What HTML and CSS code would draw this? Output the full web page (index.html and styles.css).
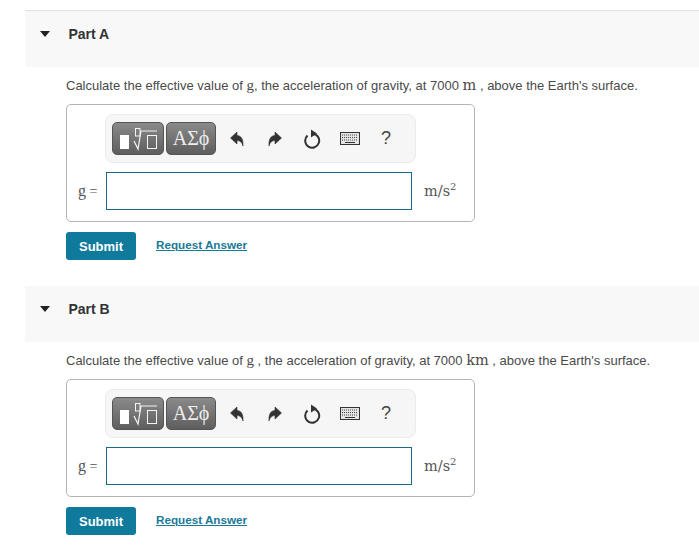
FILE: index.html

```html
<!DOCTYPE html>
<html lang="en">
<head>
    <meta charset="UTF-8">
    <title>Part A and Part B</title>
    <link rel="stylesheet" href="styles.css">
</head>
<body>
    <div class="part part-a">
        <div class="part-head first">
            <span class="arrow"></span>
            <span class="part-title">Part A</span>
        </div>
        <div class="part-body">
            <p class="question">Calculate the effective value of <span class="math">g</span>, the acceleration of gravity, at 7000 <span class="math wide">m</span> , above the Earth's surface.</p>
            <div class="answer-box">
                <div class="toolbar">
                    <button class="tool-btn templates">
                        <svg width="50" height="31" viewBox="0 0 50 31">
                            <rect x="7" y="12" width="9" height="14" fill="#fff"/>
                            <rect x="22.500" y="5.500" width="4.500" height="7.500" fill="none" stroke="#f4f4f4"/>
                            <rect x="34.500" y="12.500" width="9" height="13" fill="none" stroke="#f4f4f4"/>
                            <path d="M21 18l4 8 3-18h16" fill="none" stroke="#f4f4f4" stroke-width="1.200"/>
                        </svg>
                    </button>
                    <button class="tool-btn symbols">&Alpha;&Sigma;&#981;</button>
                    <div class="tools">
                        <svg class="tool undo" width="16" height="18" viewBox="0 0 16 18"><path d="M1.500 8L8 2v3.500c4 0 6.500 3.500 6 10.500-.7-3-2.500-5.500-6-5.500V14z" fill="#333" stroke="#333" stroke-width=".6"/></svg>
                        <svg class="tool redo" width="16" height="18" viewBox="0 0 16 18"><path d="M14.500 8L8 2v3.500C4 5.500 1.500 9 2 16c.7-3 2.500-5.500 6-5.500V14z" fill="#333" stroke="#333" stroke-width=".6"/></svg>
                        <svg class="tool reset" width="18" height="20" viewBox="0 0 18 20"><path d="M4.500 6.500A7 7 0 1 0 9.500 4.700" fill="none" stroke="#333" stroke-width="2"/><path d="M8 .5v8l6-4z" fill="#333"/></svg>
                        <svg class="tool keys" width="20" height="13" viewBox="0 0 20 13"><rect x="0.500" y="0.500" width="19" height="12" fill="#e4e4e4" stroke="#333"/><path d="M2 3h16M2 5.500h16M2 8h16" stroke="#444" stroke-dasharray="1 1"/><path d="M5 10.500h10" stroke="#333"/></svg>
                        <span class="help">?</span>
                    </div>
                </div>
                <div class="answer-row">
                    <span class="label"><span class="math">g</span> =</span>
                    <div class="answer-input"></div>
                    <span class="unit">m/s<sup>2</sup></span>
                </div>
            </div>
            <div class="actions">
                <button class="submit">Submit</button>
                <a class="request" href="#">Request Answer</a>
            </div>
        </div>
    </div>

    <div class="part part-b">
        <div class="part-head">
            <span class="arrow"></span>
            <span class="part-title">Part B</span>
        </div>
        <div class="part-body">
            <p class="question">Calculate the effective value of <span class="math">g</span> , the acceleration of gravity, at 7000 <span class="math wide">km</span> , above the Earth's surface.</p>
            <div class="answer-box">
                <div class="toolbar">
                    <button class="tool-btn templates">
                        <svg width="50" height="31" viewBox="0 0 50 31">
                            <rect x="7" y="12" width="9" height="14" fill="#fff"/>
                            <rect x="22.500" y="5.500" width="4.500" height="7.500" fill="none" stroke="#f4f4f4"/>
                            <rect x="34.500" y="12.500" width="9" height="13" fill="none" stroke="#f4f4f4"/>
                            <path d="M21 18l4 8 3-18h16" fill="none" stroke="#f4f4f4" stroke-width="1.200"/>
                        </svg>
                    </button>
                    <button class="tool-btn symbols">&Alpha;&Sigma;&#981;</button>
                    <div class="tools">
                        <svg class="tool undo" width="16" height="18" viewBox="0 0 16 18"><path d="M1.500 8L8 2v3.500c4 0 6.500 3.500 6 10.500-.7-3-2.500-5.500-6-5.500V14z" fill="#333" stroke="#333" stroke-width=".6"/></svg>
                        <svg class="tool redo" width="16" height="18" viewBox="0 0 16 18"><path d="M14.500 8L8 2v3.500C4 5.500 1.500 9 2 16c.7-3 2.500-5.500 6-5.500V14z" fill="#333" stroke="#333" stroke-width=".6"/></svg>
                        <svg class="tool reset" width="18" height="20" viewBox="0 0 18 20"><path d="M4.500 6.500A7 7 0 1 0 9.500 4.700" fill="none" stroke="#333" stroke-width="2"/><path d="M8 .5v8l6-4z" fill="#333"/></svg>
                        <svg class="tool keys" width="20" height="13" viewBox="0 0 20 13"><rect x="0.500" y="0.500" width="19" height="12" fill="#e4e4e4" stroke="#333"/><path d="M2 3h16M2 5.500h16M2 8h16" stroke="#444" stroke-dasharray="1 1"/><path d="M5 10.500h10" stroke="#333"/></svg>
                        <span class="help">?</span>
                    </div>
                </div>
                <div class="answer-row">
                    <span class="label"><span class="math">g</span> =</span>
                    <div class="answer-input"></div>
                    <span class="unit">m/s<sup>2</sup></span>
                </div>
            </div>
            <div class="actions">
                <button class="submit">Submit</button>
                <a class="request" href="#">Request Answer</a>
            </div>
        </div>
    </div>
</body>
</html>
```

FILE: styles.css

```css
html, body {
    overflow: hidden;
}
body {
    font-family: "Liberation Sans", Arial, sans-serif;
    margin: 0;
    padding: 10px 0 0 0;
    background-color: #fff;
    color: #444;
}
.part {
    margin-bottom: 25px;
}
.part-head {
    display: flex;
    align-items: center;
    height: 57px;
    margin-left: 25px;
    padding-bottom: 11px;
    box-sizing: border-box;
    background-color: #f8f8f8;
    background-clip: padding-box;
    border-top: 1px solid transparent;
}
.part-head.first {
    border-top-color: #e2e2e2;
}
.arrow {
    width: 0;
    height: 0;
    margin-left: 15px;
    border-left: 5.500px solid transparent;
    border-right: 5.500px solid transparent;
    border-top: 6px solid #222;
}
.part-title {
    margin-left: 18.500px;
    font-size: 14px;
    font-weight: bold;
    color: #333;
}
.part-body {
    padding-left: 66px;
}
.question {
    margin: 0;
    padding-top: 10px;
    height: 27px;
    font-size: 13px;
    line-height: 17px;
    color: #4a4a4a;
    white-space: nowrap;
}
.math {
    font-family: "Liberation Serif", serif;
    font-size: 15px;
}
.math.wide {
    font-family: "DejaVu Serif", serif;
    font-size: 14.500px;
}
.answer-box {
    width: 409px;
    height: 118px;
    box-sizing: border-box;
    border: 1px solid #b4b4b4;
    border-radius: 5px;
    padding: 9px 0 0 38px;
}
.toolbar {
    display: flex;
    align-items: center;
    width: 311px;
    height: 49px;
    box-sizing: border-box;
    padding-left: 6px;
    gap: 2px;
    background-color: #f6f6f6;
    border: 1px solid #ebebeb;
    border-radius: 8px;
}
.tool-btn {
    height: 33px;
    padding: 0;
    border: 1px solid #555;
    border-radius: 5px;
    background: linear-gradient(#8a8a8a, #5e5e5e);
    color: #eee;
    font-family: "Liberation Serif", serif;
    font-size: 20px;
    display: flex;
    align-items: center;
    justify-content: center;
}
.templates {
    width: 52px;
}
.symbols {
    width: 50px;
}
.tools {
    flex: 1;
    display: flex;
    align-items: center;
    height: 100%;
}
.tool {
    flex: none;
}
.undo {
    margin-left: 11px;
}
.redo {
    margin-left: 22px;
}
.reset {
    margin-left: 20px;
}
.keys {
    margin-left: 19px;
}
.help {
    margin-left: 21px;
    font-size: 18px;
    color: #444;
}
.answer-row {
    display: flex;
    align-items: center;
    margin-top: 9px;
    margin-left: -38px;
}
.label {
    width: 39px;
    box-sizing: border-box;
    padding-left: 11px;
    font-family: "Liberation Serif", serif;
    font-size: 14px;
    color: #555;
}
.label .math {
    font-size: 16px;
}
.answer-input {
    width: 306px;
    height: 38px;
    box-sizing: border-box;
    background-color: #fff;
    border: 1px solid #1b6a84;
}
.unit {
    margin-left: 12px;
    font-family: "DejaVu Serif", serif;
    font-size: 14.500px;
    color: #555;
}
.unit sup {
    font-size: 10px;
    line-height: 0;
}
.actions {
    display: flex;
    align-items: center;
    margin-top: 10px;
}
.submit {
    width: 70px;
    height: 28px;
    padding: 0;
    border: none;
    border-radius: 3px;
    background-color: #0f7a9c;
    color: #fff;
    font-family: "Liberation Sans", Arial, sans-serif;
    font-size: 13px;
    font-weight: bold;
}
.request {
    margin-left: 20px;
    margin-top: -3px;
    font-size: 11.700px;
    font-weight: bold;
    color: #1a7a96;
}
```
